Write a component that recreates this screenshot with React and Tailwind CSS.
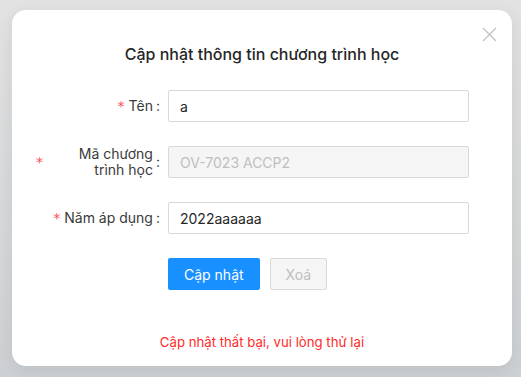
export default function App() {
  const font = { fontFamily: 'Inter, "Noto Sans", sans-serif' };
  return (
    <div
      className="w-[521px] h-[377px] overflow-hidden bg-gradient-to-b from-[#e2e2e2] to-[#cdd0d3] pt-[10px] pl-[12px]"
      style={font}
    >
      <div className="relative w-[500px] h-[356px] bg-white rounded-[14px] shadow-[0_4px_16px_rgba(0,0,0,0.08)] flex flex-col">
        <button className="absolute right-[15px] top-[17px] w-[15px] h-[15px] text-[#c4c4c4]">
          <svg viewBox="0 0 15 15" width="15" height="15" fill="none" stroke="currentColor" strokeWidth="1.4">
            <path d="M1 1L14 14M14 1L1 14" />
          </svg>
        </button>
        <h2 className="pt-[32px] text-center text-[16px] leading-[24px] font-medium text-[#262626]">
          Cập nhật thông tin chương trình học
        </h2>
        <div className="mt-[24px] flex flex-col gap-[24px] pl-[24px]">
          <Row label="Tên" value="a" />
          <Row label="Mã chương trình học" value="OV-7023 ACCP2" disabled />
          <Row label="Năm áp dụng" value="2022aaaaaa" />
          <div className="flex gap-[10px] pl-[132px]">
            <button className="h-[32px] px-[16px] rounded-[2px] bg-[#1890ff] text-white text-[14px]">
              Cập nhật
            </button>
            <button className="h-[32px] px-[15px] rounded-[2px] bg-[#f5f5f5] border border-[#d9d9d9] text-[#bfbfbf] text-[14px]">
              Xoá
            </button>
          </div>
        </div>
        <p className="mt-[41px] text-center text-[13.2px] leading-[22px] text-[#ff2a2a]">
          Cập nhật thất bại, vui lòng thử lại
        </p>
      </div>
    </div>
  );
}

function Row({ label, value, disabled }) {
  return (
    <div className="flex items-center h-[32px]">
      <div className="w-[132px] pr-[8px] flex items-center justify-end text-[14px] leading-[16.5px] text-[#3a3a3a]">
        <span className="text-[#ff4d4f] mr-[4px] shrink-0" style={{ fontFamily: '"DejaVu Sans", sans-serif' }}>*</span>
        <span className="text-right">{label}</span>
        <span className="ml-[3px] shrink-0">:</span>
      </div>
      <div
        className={
          "w-[301px] h-[32px] border border-[#d9d9d9] rounded-[2px] px-[11px] flex items-center text-[14px] " +
          (disabled ? "bg-[#f5f5f5] text-[#bfbfbf]" : "bg-white text-[#262626]")
        }
      >
        {value}
      </div>
    </div>
  );
}
